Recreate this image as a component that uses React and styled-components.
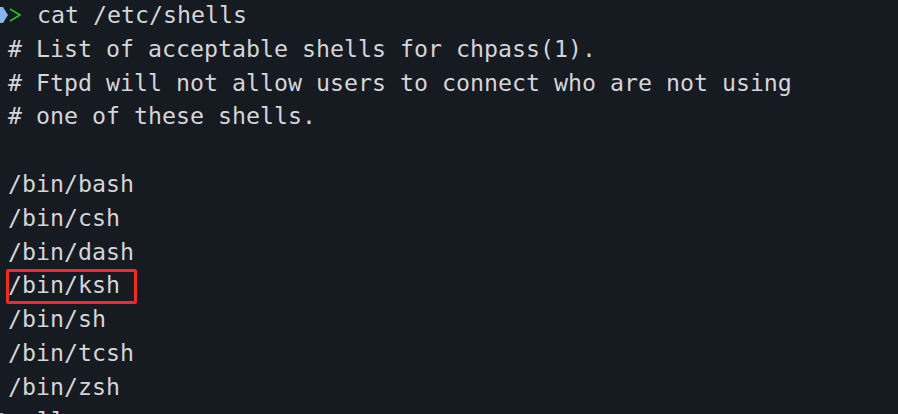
import styled, { createGlobalStyle } from 'styled-components';

const GlobalStyle = createGlobalStyle`
  html, body {
    margin: 0;
    padding: 0;
    background: #161a21;
  }
`;

const lines = [
  '# List of acceptable shells for chpass(1).',
  '# Ftpd will not allow users to connect who are not using',
  '# one of these shells.',
  '',
  '/bin/bash',
  '/bin/csh',
  '/bin/dash',
  { text: '/bin/ksh', marked: true },
  '/bin/sh',
  '/bin/tcsh',
  '/bin/zsh',
];

function Prompt({ command }) {
  return (
    <Line>
      <PromptMark>
        <svg width="22" height="34" viewBox="0 0 22 34">
          <path d="M0 9 L3 9 L8 17 L3 25 L0 25 Z" fill="#86b6ee" />
          <path d="M10 11 L20 17 L10 23" fill="none" stroke="#22c522" strokeWidth="1.6" />
        </svg>
      </PromptMark>
      <Command>{command}</Command>
    </Line>
  );
}

function App() {
  return (
    <>
      <GlobalStyle />
      <Terminal>
        <Prompt command="cat /etc/shells" />
        {lines.map((l, i) =>
          typeof l === 'string' ? (
            <Line key={i}>{l || '\u00a0'}</Line>
          ) : (
            <Line key={i}>
              <Marked>{l.text}</Marked>
            </Line>
          )
        )}
        <Prompt command="ll" />
      </Terminal>
    </>
  );
}

const Terminal = styled.div`
  width: 898px;
  height: 414px;
  overflow: hidden;
  box-sizing: border-box;
  background: #161a21;
  color: #d3d5d8;
  font-family: 'DejaVu Sans Mono', 'Liberation Mono', monospace;
  font-size: 23.25px;
  padding-left: 8px;
`;

const Line = styled.div`
  height: 33.8px;
  line-height: 33.8px;
  white-space: pre;
  display: flex;
  align-items: center;

  &:first-child {
    margin-top: -2px;
  }
`;

const PromptMark = styled.span`
  display: flex;
  margin-left: -8px;
  width: 37px;
  height: 33.8px;
  flex-shrink: 0;
`;

const Command = styled.span``;

const Marked = styled.span`
  position: relative;

  &::after {
    content: '';
    position: absolute;
    left: -2px;
    right: -17px;
    top: 1px;
    bottom: -2px;
    border: 3px solid #ee2b24;
    border-radius: 2px;
  }
`;

export default App;
